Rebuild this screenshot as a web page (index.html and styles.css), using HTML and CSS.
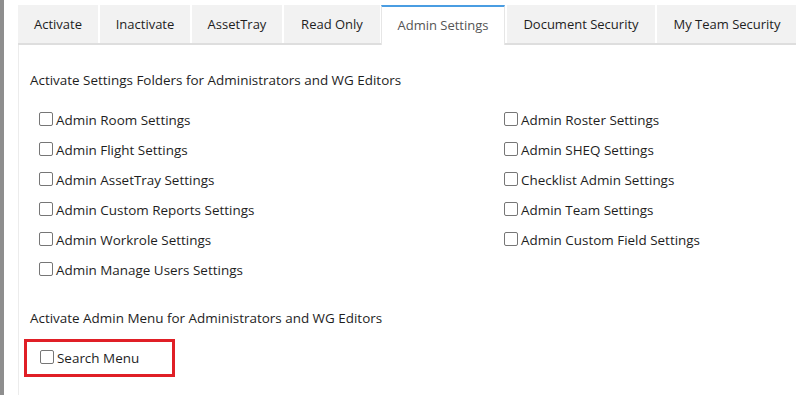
FILE: index.html
```html
<!DOCTYPE html>
<html>
<head>
<meta charset="utf-8">
<link rel="stylesheet" href="styles.css">
</head>
<body>
<div class="page">
  <div class="sidebar"></div>
  <div class="main">
    <div class="tabs">
      <div class="tab w1">Activate</div>
      <div class="tab w2">Inactivate</div>
      <div class="tab w3">AssetTray</div>
      <div class="tab w4">Read Only</div>
      <div class="tab active w5">Admin Settings</div>
      <div class="tab w6">Document Security</div>
      <div class="tab w7">My Team Security</div>
    </div>
    <div class="panel">
      <div class="heading">Activate Settings Folders for Administrators and WG Editors</div>
      <div class="grid">
        <div class="col">
          <label class="item"><span class="box"></span>Admin Room Settings</label>
          <label class="item"><span class="box"></span>Admin Flight Settings</label>
          <label class="item"><span class="box"></span>Admin AssetTray Settings</label>
          <label class="item"><span class="box"></span>Admin Custom Reports Settings</label>
          <label class="item"><span class="box"></span>Admin Workrole Settings</label>
          <label class="item"><span class="box"></span>Admin Manage Users Settings</label>
        </div>
        <div class="col">
          <label class="item"><span class="box"></span>Admin Roster Settings</label>
          <label class="item"><span class="box"></span>Admin SHEQ Settings</label>
          <label class="item"><span class="box"></span>Checklist Admin Settings</label>
          <label class="item"><span class="box"></span>Admin Team Settings</label>
          <label class="item"><span class="box"></span>Admin Custom Field Settings</label>
        </div>
      </div>
      <div class="heading second">Activate Admin Menu for Administrators and WG Editors</div>
      <div class="highlight">
        <label class="item"><span class="box"></span>Search Menu</label>
      </div>
    </div>
  </div>
</div>
</body>
</html>
```
FILE: styles.css
```css
html, body {
  margin: 0;
  padding: 0;
  background: #fff;
}
body {
  font-family: "Open Sans", "Noto Sans", sans-serif;
  font-size: 13px;
  color: #1e1e1e;
  width: 796px;
  height: 395px;
  overflow: hidden;
}
.page {
  display: flex;
  height: 395px;
}
.sidebar {
  width: 4px;
  background: #8e8e8e;
  flex: none;
}
.main {
  margin-left: 14px;
  flex: 1;
  display: flex;
  flex-direction: column;
}
.tabs {
  display: flex;
  gap: 2px;
  padding-top: 5px;
  height: 38px;
  border-bottom: 2px solid #dedede;
}
.tab {
  background: #f2f2f2;
  display: flex;
  align-items: center;
  justify-content: center;
  height: 38px;
  box-sizing: border-box;
  flex: none;
}
.tab.active {
  background: #fff;
  color: #555;
  border-top: 2px solid #4a9de2;
  border-left: 1px solid #e6e6e6;
  border-right: 1px solid #e6e6e6;
  height: 40px;
  margin-bottom: -2px;
  padding-bottom: 2px;
  margin-left: -1px;
}
.w1 { width: 80px; }
.w2 { width: 90px; }
.w3 { width: 90px; }
.w4 { width: 96px; }
.w5 { width: 124px; }
.w6 { width: 148px; }
.w7 { width: 140px; }
.panel {
  flex: 1;
  border-left: 1px solid #ececec;
  padding: 25px 0 0 11px;
  font-size: 13.45px;
}
.heading {
  line-height: 20px;
}
.heading.second {
  margin-top: 23px;
}
.grid {
  display: flex;
  padding-top: 15px;
  padding-left: 9px;
}
.col {
  display: flex;
  flex-direction: column;
}
.col:first-child {
  width: 465px;
}
.item {
  display: flex;
  align-items: center;
  height: 30px;
  line-height: 20px;
}
.box {
  width: 12px;
  height: 12px;
  border: 1px solid #767676;
  border-radius: 2px;
  margin-right: 3px;
  margin-top: -2px;
  background: #fff;
  flex: none;
}
.highlight {
  margin-top: 11px;
  margin-left: -6px;
  width: 132px;
  height: 32px;
  border: 3px solid #e01f26;
  padding-left: 13px;
  display: flex;
  align-items: center;
}
```
